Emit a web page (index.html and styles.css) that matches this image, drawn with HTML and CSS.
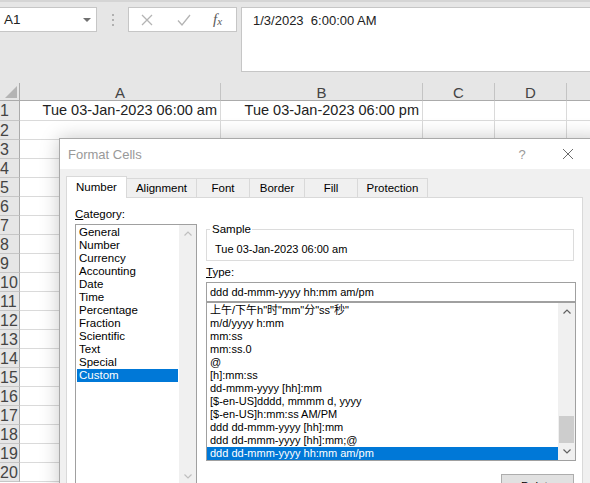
FILE: index.html
```html
<!DOCTYPE html>
<html lang="en">

<head>
  <meta charset="UTF-8">
  <meta name="viewport" content="width=device-width, initial-scale=1.0">
  <title>Format Cells</title>
  <link rel="stylesheet" href="styles.css">
</head>

<body>

  <!-- formula bar -->
  <div class="formula-bar">
    <div class="name-box">
      <span>A1</span>
      <svg class="caret" viewBox="0 0 8 4" width="8" height="4"><path d="M0 0h8L4 4z"></path></svg>
    </div>
    <div class="grip"><i></i><i></i><i></i></div>
    <div class="fx-box">
      <svg class="tool" viewBox="0 0 12 12" width="12" height="12">
        <path d="M1 1l10 10M11 1L1 11"></path>
      </svg>
      <svg class="tool enter" viewBox="0 0 14 12" width="14" height="12">
        <path d="M1 6.5l4 4.5L13 1"></path>
      </svg>
      <span class="fx">f<sub>x</sub></span>
    </div>
    <div class="formula">1/3/2023  6:00:00 AM</div>
  </div>

  <!-- sheet -->
  <div class="sheet">
    <div class="corner"><svg viewBox="0 0 12 12" width="12" height="12"><path d="M12 0v12H0z"></path></svg></div>
    <div class="col">A</div><div class="col">B</div><div class="col">C</div><div class="col">D</div><div class="col"></div>

    <div class="row">1</div><div class="num">Tue 03-Jan-2023 06:00 am</div><div class="num">Tue 03-Jan-2023 06:00 pm</div><div></div><div></div><div></div>
    <div class="row">2</div><div></div><div></div><div></div><div></div><div></div>
    <div class="row">3</div><div></div><div></div><div></div><div></div><div></div>
    <div class="row">4</div><div></div><div></div><div></div><div></div><div></div>
    <div class="row">5</div><div></div><div></div><div></div><div></div><div></div>
    <div class="row">6</div><div></div><div></div><div></div><div></div><div></div>
    <div class="row">7</div><div></div><div></div><div></div><div></div><div></div>
    <div class="row">8</div><div></div><div></div><div></div><div></div><div></div>
    <div class="row">9</div><div></div><div></div><div></div><div></div><div></div>
    <div class="row">10</div><div></div><div></div><div></div><div></div><div></div>
    <div class="row">11</div><div></div><div></div><div></div><div></div><div></div>
    <div class="row">12</div><div></div><div></div><div></div><div></div><div></div>
    <div class="row">13</div><div></div><div></div><div></div><div></div><div></div>
    <div class="row">14</div><div></div><div></div><div></div><div></div><div></div>
    <div class="row">15</div><div></div><div></div><div></div><div></div><div></div>
    <div class="row">16</div><div></div><div></div><div></div><div></div><div></div>
    <div class="row">17</div><div></div><div></div><div></div><div></div><div></div>
    <div class="row">18</div><div></div><div></div><div></div><div></div><div></div>
    <div class="row">19</div><div></div><div></div><div></div><div></div><div></div>
    <div class="row">20</div><div></div><div></div><div></div><div></div><div></div>
  </div>

  <!-- Format Cells dialog -->
  <div class="dialog">
    <div class="title-bar">
      <span class="title">Format Cells</span>
      <span class="help">?</span>
      <span class="close">
        <svg viewBox="0 0 10 10" width="10" height="10"><path d="M0 0l10 10M10 0L0 10"></path></svg>
      </span>
    </div>

    <div class="dialog-body">
      <div class="tabs">
        <div class="tab active">Number</div>
        <div class="tab">Alignment</div>
        <div class="tab">Font</div>
        <div class="tab">Border</div>
        <div class="tab">Fill</div>
        <div class="tab">Protection</div>
      </div>

      <div class="panel">
        <div class="category">
          <div class="label"><u>C</u>ategory:</div>
          <div class="listbox cat-list">
            <div class="items">
              <div>General</div>
              <div>Number</div>
              <div>Currency</div>
              <div>Accounting</div>
              <div>Date</div>
              <div>Time</div>
              <div>Percentage</div>
              <div>Fraction</div>
              <div>Scientific</div>
              <div>Text</div>
              <div>Special</div>
              <div class="selected">Custom</div>
            </div>
            <div class="scrollbar faded">
              <div class="arrow"><svg viewBox="0 0 8 5" width="8" height="5"><path d="M0.5 4.5L4 1l3.5 3.5"></path></svg></div>
              <div class="arrow"><svg viewBox="0 0 8 5" width="8" height="5"><path d="M0.5 0.5L4 4l3.5-3.5"></path></svg></div>
            </div>
          </div>
        </div>

        <div class="format">
          <fieldset class="sample">
            <legend>Sample</legend>
            Tue 03-Jan-2023 06:00 am
          </fieldset>

          <div class="label type-label"><u>T</u>ype:</div>
          <div class="type-input">ddd dd-mmm-yyyy hh:mm am/pm</div>

          <div class="listbox type-list">
            <div class="items">
              <div>上午/下午h"时"mm"分"ss"秒"</div>
              <div>m/d/yyyy h:mm</div>
              <div>mm:ss</div>
              <div>mm:ss.0</div>
              <div>@</div>
              <div>[h]:mm:ss</div>
              <div>dd-mmm-yyyy [hh]:mm</div>
              <div>[$-en-US]dddd, mmmm d, yyyy</div>
              <div>[$-en-US]h:mm:ss AM/PM</div>
              <div>ddd dd-mmm-yyyy [hh]:mm</div>
              <div>ddd dd-mmm-yyyy [hh]:mm;@</div>
              <div class="selected">ddd dd-mmm-yyyy hh:mm am/pm</div>
            </div>
            <div class="scrollbar">
              <div class="arrow"><svg viewBox="0 0 8 5" width="8" height="5"><path d="M0.5 4.5L4 1l3.5 3.5"></path></svg></div>
              <div class="thumb"></div>
              <div class="arrow"><svg viewBox="0 0 8 5" width="8" height="5"><path d="M0.5 0.5L4 4l3.5-3.5"></path></svg></div>
            </div>
          </div>

          <button class="delete">Delete</button>
        </div>
      </div>
    </div>
  </div>

</body>

</html>
```

FILE: styles.css
```css
*,
*::before,
*::after {
  box-sizing: border-box;
}

body {
  margin: 0;
  width: 590px;
  height: 483px;
  overflow: hidden;
  position: relative;
  background: #fff;
  color: #000;
  font-family: "Liberation Sans", Arial, sans-serif;
}

/* formula bar */

.formula-bar {
  height: 83px;
  display: flex;
  align-items: flex-start;
  padding-top: 5px;
  background: #e6e6e6;
  border-top: 2px solid #d5d5d5;
}

.name-box {
  width: 98px;
  height: 25px;
  margin-left: -1px;
  padding: 0 5px 0 4px;
  display: flex;
  align-items: center;
  justify-content: space-between;
  background: #fff;
  border: 1px solid #c6c6c6;
  font-size: 13.5px;
  color: #222;
}

.caret {
  fill: #707070;
}

.grip {
  width: 31px;
  height: 25px;
  display: flex;
  flex-direction: column;
  align-items: center;
  justify-content: center;
  gap: 3px;
}

.grip i {
  width: 2px;
  height: 2px;
  background: #b0b0b0;
}

.fx-box {
  width: 109px;
  height: 25px;
  padding-left: 12px;
  display: flex;
  align-items: center;
  background: #fff;
  border: 1px solid #c6c6c6;
}

.tool {
  fill: none;
  stroke: #b4b4b4;
  stroke-width: 1.3;
}

.tool.enter {
  margin-left: 24px;
}

.fx {
  margin-left: 22px;
  font-family: "Liberation Serif", serif;
  font-style: italic;
  font-size: 15px;
  color: #5a5a5a;
}

.fx sub {
  font-size: 11px;
  vertical-align: -1px;
}

.formula {
  flex: 1;
  height: 65px;
  margin: 0 -10px 0 4px;
  padding: 5px 11px;
  background: #fff;
  border: 1px solid #c6c6c6;
  font-size: 13px;
  color: #222;
  white-space: pre;
}

/* sheet */

.sheet {
  display: grid;
  grid-template-columns: 20px 201px 202px 72px 72px 72px;
  grid-template-rows: 18px 20px;
  grid-auto-rows: 19px;
}

.sheet > div {
  overflow: hidden;
  white-space: nowrap;
  border-right: 1px solid #dadada;
  border-bottom: 1px solid #dadada;
}

.sheet .corner,
.sheet .col {
  background: #e6e6e6;
  border-right-color: #c4c4c4;
  border-bottom-color: #ababab;
}

.sheet .corner {
  display: flex;
  align-items: flex-end;
  justify-content: flex-end;
  padding: 0 2px 2px 0;
  border-right-color: #ababab;
  fill: #b4b4b4;
}

.sheet .col {
  text-align: center;
  font-size: 15px;
  line-height: 19px;
  color: #444;
}

.sheet .row {
  padding-left: 0;
  background: #e6e6e6;
  border-right-color: #ababab;
  border-bottom-color: #c6c6c6;
  font-family: "Liberation Sans Narrow", "Liberation Sans", sans-serif;
  font-size: 16px;
  line-height: 19px;
  color: #444;
}

.sheet .num {
  padding-right: 3px;
  text-align: right;
  font-size: 14.5px;
  line-height: 19px;
  color: #222;
}

/* dialog */

.dialog {
  position: absolute;
  left: 59px;
  top: 138px;
  width: 545px;
  height: 360px;
  background: #f0f0f0;
  border: 1px solid #a9a9a9;
  box-shadow: 0 0 18px rgba(0, 0, 0, 0.22);
  font-size: 11.5px;
}

.title-bar {
  height: 30px;
  padding-left: 8px;
  display: flex;
  align-items: center;
  background: #fff;
}

.title {
  flex: 1;
  font-size: 13px;
  color: #999;
}

.help {
  width: 16px;
  margin-right: 23px;
  text-align: center;
  font-size: 13px;
  color: #999;
}

.close {
  width: 30px;
  margin-right: 20px;
  display: flex;
  justify-content: center;
  stroke: #6b6b6b;
}

.dialog-body {
  padding: 7px 0 0 6px;
}

.tabs {
  height: 21px;
  display: flex;
  align-items: flex-end;
  position: relative;
  z-index: 1;
}

.tab {
  height: 19px;
  margin-right: -1px;
  display: flex;
  align-items: center;
  justify-content: center;
  border: 1px solid #d9d9d9;
  border-bottom: 0;
}

.tab.active {
  height: 22px;
  margin-bottom: -1px;
  padding-bottom: 1px;
  background: #fff;
}

.tab:nth-child(1) { width: 61px; }
.tab:nth-child(2) { width: 71px; }
.tab:nth-child(3) { width: 54px; }
.tab:nth-child(4) { width: 56px; }
.tab:nth-child(5) { width: 54px; }
.tab:nth-child(6) { width: 71px; }

.panel {
  width: 517px;
  height: 320px;
  padding: 9px 6px 0 8px;
  display: flex;
  gap: 9px;
  background: #fff;
  border: 1px solid #d9d9d9;
}

.label {
  line-height: 14px;
  margin-bottom: 3px;
}

.category {
  width: 122px;
}

.listbox {
  display: flex;
  border: 1px solid #a0a0a0;
}

.listbox .items {
  flex: 1;
  padding: 1px;
  line-height: 13px;
}

.listbox .selected {
  background: #0078d7;
  color: #fff;
}

.cat-list {
  height: 262px;
}

.cat-list .items div {
  padding-left: 2px;
}

.scrollbar {
  width: 17px;
  display: flex;
  flex-direction: column;
  justify-content: space-between;
  background: #f0f0f0;
}

.scrollbar .arrow {
  height: 17px;
  display: flex;
  align-items: center;
  justify-content: center;
  fill: none;
  stroke: #606060;
  stroke-width: 1.2;
}

.scrollbar.faded .arrow {
  stroke: #bfbfbf;
}

.scrollbar .thumb {
  height: 27px;
  margin: auto 1px 0;
  background: #cdcdcd;
}

.format {
  width: 370px;
  display: flex;
  flex-direction: column;
}

.sample {
  margin: 15px 2px 0 0;
  padding: 7px 8px 4px;
  border: 1px solid #dcdcdc;
  font-size: 11px;
  line-height: 13px;
}

.sample legend {
  margin-left: -5px;
  padding: 0 1px 0 2px;
  font-size: 11.5px;
  line-height: 14px;
}

.type-label {
  margin-top: 4px;
}

.type-input {
  height: 20px;
  padding-left: 3px;
  border: 1px solid #a0a0a0;
  font-size: 11px;
  line-height: 18px;
  white-space: nowrap;
}

.type-list {
  height: 159px;
  font-size: 11px;
  font-family: "Liberation Sans", "Noto Sans CJK SC", sans-serif;
}

.type-list .items {
  padding: 1px 0 0;
}

.type-list .items div {
  padding-left: 3px;
  white-space: nowrap;
}

.delete {
  align-self: flex-end;
  width: 73px;
  height: 23px;
  margin: 13px 2px 0 0;
  padding: 0;
  background: #e1e1e1;
  border: 1px solid #adadad;
  font: inherit;
  color: #000;
}
```
